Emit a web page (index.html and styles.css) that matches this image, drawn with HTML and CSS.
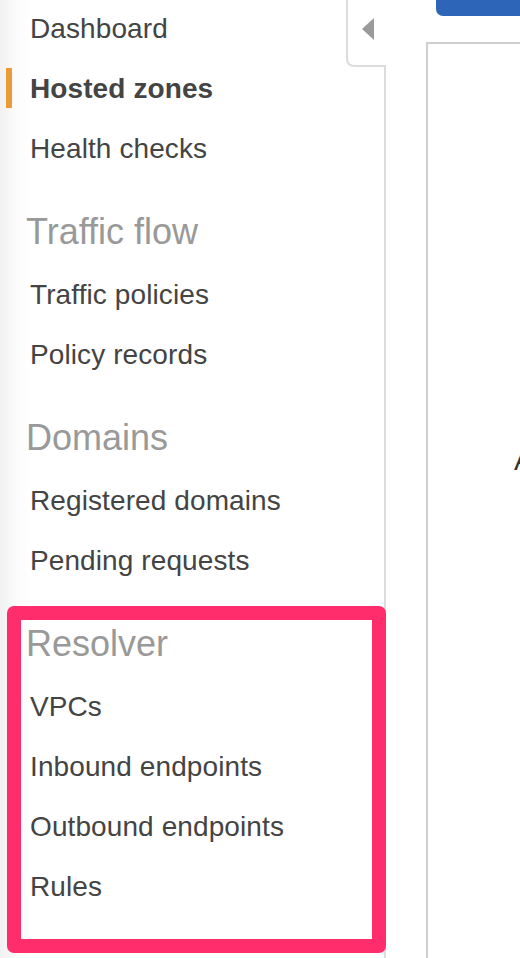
FILE: index.html
```html
<!DOCTYPE html>
<html lang="en">
<head>
<meta charset="utf-8">
<title>Route 53</title>
<link rel="stylesheet" href="styles.css">
</head>
<body>
<div class="layout">
  <nav class="sidebar">
    <div class="toggle">
      <svg class="toggle-icon" width="12" height="22" viewBox="0 0 12 22"><polygon points="0,11 12,0 12,22" fill="#9a9a9a"/></svg>
    </div>
    <ul class="nav-group">
      <li class="nav-item">Dashboard</li>
      <li class="nav-item active">Hosted zones</li>
      <li class="nav-item">Health checks</li>
    </ul>
    <div class="nav-heading">Traffic flow</div>
    <ul class="nav-group">
      <li class="nav-item">Traffic policies</li>
      <li class="nav-item">Policy records</li>
    </ul>
    <div class="nav-heading">Domains</div>
    <ul class="nav-group">
      <li class="nav-item">Registered domains</li>
      <li class="nav-item">Pending requests</li>
    </ul>
    <div class="nav-heading">Resolver</div>
    <ul class="nav-group">
      <li class="nav-item">VPCs</li>
      <li class="nav-item">Inbound endpoints</li>
      <li class="nav-item">Outbound endpoints</li>
      <li class="nav-item">Rules</li>
    </ul>
    <div class="highlight"></div>
  </nav>
  <main class="main">
    <div class="top-button"></div>
    <section class="panel">
      <p class="panel-text">A hosted zone is a container for records</p>
    </section>
  </main>
</div>
</body>
</html>
```
FILE: styles.css
```css
html, body {
  margin: 0;
  padding: 0;
  background: #fff;
  overflow: hidden;
}

body {
  font-family: "Liberation Sans", Arial, Helvetica, sans-serif;
  color: #444;
}

.layout {
  display: flex;
  height: 958px;
  width: 520px;
  overflow: hidden;
}

.sidebar {
  position: relative;
  flex: 0 0 384px;
  width: 384px;
  padding-top: 1px;
  border-right: 2px solid #dcdcdc;
  background: linear-gradient(to right, #f1f1f1 0, #fafafa 14px, #fff 30px);
}

.toggle {
  position: absolute;
  top: 0;
  right: -2px;
  width: 40px;
  height: 67px;
  background: #fff;
  border-left: 2px solid #dcdcdc;
  border-bottom: 2px solid #dcdcdc;
  border-bottom-left-radius: 8px;
  display: flex;
  align-items: flex-start;
  padding-top: 18px;
  padding-left: 14px;
  box-sizing: border-box;
}

.toggle-icon {
  display: block;
}

.nav-group {
  list-style: none;
  margin: 0;
  padding: 0;
}

.nav-item {
  position: relative;
  font-size: 28px;
  line-height: 56px;
  padding: 0 0 4px 30px;
  color: #444;
  white-space: nowrap;
  letter-spacing: 0.1px;
}

.nav-item.active {
  font-weight: bold;
}

.nav-item.active::before {
  content: "";
  position: absolute;
  left: 6px;
  top: 7px;
  width: 6px;
  height: 40px;
  background: #ec9a37;
}

.nav-heading {
  font-size: 36px;
  line-height: 40px;
  padding: 31px 0 15px 26px;
  color: #999;
  white-space: nowrap;
}

.highlight {
  position: absolute;
  left: 7px;
  top: 606px;
  width: 351px;
  height: 319px;
  border: 14px solid #ff2d6b;
  border-radius: 7px;
  pointer-events: none;
}

.main {
  flex: 1 1 auto;
  min-width: 0;
  padding-left: 40px;
  display: flex;
  flex-direction: column;
}

.top-button {
  height: 16px;
  margin-left: 10px;
  background: #2d66b8;
  border-bottom-left-radius: 7px;
}

.panel {
  margin-top: 26px;
  flex: 1 1 auto;
  border-left: 2px solid #cfcfcf;
  border-top: 2px solid #cfcfcf;
  padding: 397px 0 0 86px;
  overflow: hidden;
}

.panel-text {
  margin: 0;
  font-size: 28px;
  line-height: 40px;
  color: #333;
  white-space: nowrap;
}
```
